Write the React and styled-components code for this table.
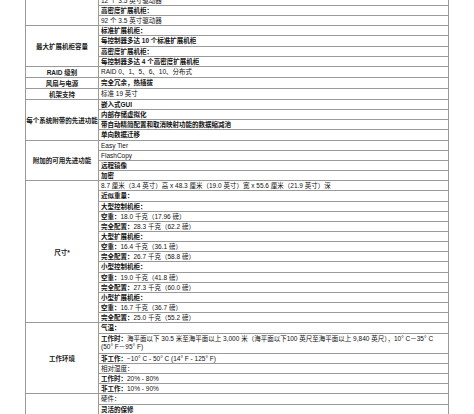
import React from 'react'
import styled, { createGlobalStyle } from 'styled-components'

const GlobalStyle = createGlobalStyle`
    html, body {
        margin:0;
        padding:0;
        background:#fff;
    }
    body {
        font-family:"Liberation Sans", "Noto Sans CJK SC", sans-serif;
        color:#111;
    }
`

const ROW = 10.16

const groups = [
    {
        label: '',
        rows: [
            { t: '12 个 3.5 英寸驱动器' },
            { t: '高密度扩展机柜：', bold: true },
            { t: '92 个 3.5 英寸驱动器' },
        ],
    },
    {
        label: '最大扩展机柜容量',
        rows: [
            { t: '标准扩展机柜：', bold: true },
            { t: '每控制器多达 10 个标准扩展机柜', bold: true },
            { t: '高密度扩展机柜：', bold: true },
            { t: '每控制器多达 4 个高密度扩展机柜', bold: true },
        ],
    },
    { label: 'RAID 级别', rows: [{ t: 'RAID 0、1、5、6、10、分布式' }] },
    { label: '风扇与电源', rows: [{ t: '完全冗余，热插拔', bold: true }] },
    { label: '机架支持', rows: [{ t: '标准 19 英寸' }] },
    {
        label: '每个系统附带的先进功能',
        rows: [
            { t: '嵌入式GUI', bold: true },
            { t: '内部存储虚拟化', bold: true },
            { t: '带自动精简配置和取消映射功能的数据缩减池', bold: true },
            { t: '单向数据迁移', bold: true },
        ],
    },
    {
        label: '附加的可用先进功能',
        rows: [
            { t: 'Easy Tier' },
            { t: 'FlashCopy' },
            { t: '远程镜像', bold: true },
            { t: '加密', bold: true },
        ],
    },
    {
        label: '尺寸*',
        rows: [
            { t: '8.7 厘米（3.4 英寸）高 x 48.3 厘米（19.0 英寸）宽 x 55.6 厘米（21.9 英寸）深' },
            { t: '近似重量：', bold: true },
            { t: '大型控制机柜：', bold: true },
            { k: '空重：', t: '18.0 千克（17.96 磅）' },
            { k: '完全配置：', t: '28.3 千克（62.2 磅）' },
            { t: '大型扩展机柜：', bold: true },
            { k: '空重：', t: '16.4 千克（36.1 磅）' },
            { k: '完全配置：', t: '26.7 千克（58.8 磅）' },
            { t: '小型控制机柜：', bold: true },
            { k: '空重：', t: '19.0 千克（41.8 磅）' },
            { k: '完全配置：', t: '27.3 千克（60.0 磅）' },
            { t: '小型扩展机柜：', bold: true },
            { k: '空重：', t: '16.7 千克（36.7 磅）' },
            { k: '完全配置：', t: '25.0 千克（55.2 磅）' },
        ],
    },
    {
        label: '工作环境',
        rows: [
            { t: '气温：', bold: true },
            {
                k: '工作时：',
                t: '海平面以下 30.5 米至海平面以上 3,000 米（海平面以下100 英尺至海平面以上 9,840 英尺），10° C－35° C',
                t2: '(50° F－95° F)',
            },
            { k: '非工作：', t: '−10° C - 50° C (14° F - 125° F)' },
            { t: '相对湿度：' },
            { k: '工作时：', t: '20% - 80%' },
            { k: '非工作：', t: '10% - 90%' },
        ],
    },
    {
        label: '',
        rows: [
            { t: '硬件：' },
            { t: '灵活的保修', bold: true },
        ],
    },
]

function App() {
    return (
        <>
            <GlobalStyle />
            <Table>
                {groups.map((g, gi) => (
                    <Group key={gi}>
                        <Label>{g.label}</Label>
                        <Values>
                            {g.rows.map((r, ri) => (
                                <Value key={ri} $bold={r.bold} $double={!!r.t2}>
                                    {r.k && <Key>{r.k}</Key>}
                                    {r.t}
                                    {r.t2 && <><br />{r.t2}</>}
                                </Value>
                            ))}
                        </Values>
                    </Group>
                ))}
            </Table>
        </>
    )
}

export default App

const Table = styled.div`
    margin-top:-4.16px;
    margin-left:25px;
    width:422px;
    border-left:1px solid #9a9a9a;
    border-right:1px solid #9a9a9a;
    font-size:6.5px;
`
const Group = styled.div`
    display:flex;
    border-bottom:1px solid #9a9a9a;
`
const Label = styled.div`
    width:72px;
    flex-shrink:0;
    border-right:1px solid #9a9a9a;
    display:flex;
    align-items:center;
    justify-content:center;
    text-align:center;
    font-weight:bold;
    color:#1a1a1a;
`
const Values = styled.div`
    flex:1;
    display:flex;
    flex-direction:column;
    min-width:0;
`
const Value = styled.div`
    box-sizing:border-box;
    height:${ROW}px;
    line-height:${ROW - 1}px;
    padding-left:2px;
    border-bottom:1px solid #9a9a9a;
    white-space:nowrap;
    font-weight:${p => (p.$bold ? 'bold' : 'normal')};
    &:last-child {
        height:${ROW - 1}px;
        border-bottom:none;
    }
    ${p => p.$double && `
        height:${ROW * 2}px;
        line-height:8.6px;
        padding-top:1px;
    `}
`
const Key = styled.span`
    font-weight:bold;
`
